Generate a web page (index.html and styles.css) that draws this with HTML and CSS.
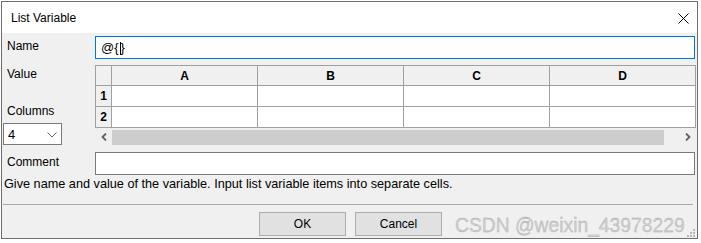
FILE: index.html
```html
<html>
<head>
  <meta charset="UTF-8">
  <title>List Variable</title>
  <link rel="stylesheet" href="styles.css">
</head>
<body>
  <div class="dialog">
    <div class="titlebar">
      <span class="title">List Variable</span>
      <svg class="close" width="11" height="11" viewBox="0 0 11 11">
        <path d="M0.5 0.5 L10.5 10.5 M10.5 0.5 L0.5 10.5" stroke="#000" stroke-width="1" fill="none"/>
      </svg>
    </div>

    <div class="content">
      <div class="field-row">
        <label class="field-label">Name</label>
        <div class="text-input focused">@{<span class="caret"></span>}</div>
      </div>

      <div class="value-row">
        <div class="side">
          <div class="side-label value-label">Value</div>
          <div class="side-label columns-label">Columns</div>
          <div class="combo">
            <span>4</span>
            <svg width="10" height="6" viewBox="0 0 10 6">
              <polyline points="0.5,0.5 5,5 9.5,0.5" stroke="#666" stroke-width="1" fill="none"/>
            </svg>
          </div>
        </div>

        <div class="sheet">
          <div class="grid">
            <div class="cell corner"></div>
            <div class="cell head">A</div>
            <div class="cell head">B</div>
            <div class="cell head">C</div>
            <div class="cell head">D</div>

            <div class="cell rowhead">1</div>
            <div class="cell"></div>
            <div class="cell"></div>
            <div class="cell"></div>
            <div class="cell"></div>

            <div class="cell rowhead">2</div>
            <div class="cell"></div>
            <div class="cell"></div>
            <div class="cell"></div>
            <div class="cell"></div>
          </div>

          <div class="hscroll">
            <div class="arrow">
              <svg width="6" height="8" viewBox="0 0 6 8">
                <polyline points="5,0.5 1.5,4 5,7.5" stroke="#606060" stroke-width="1.8" fill="none"/>
              </svg>
            </div>
            <div class="track"><div class="thumb"></div></div>
            <div class="arrow">
              <svg width="6" height="8" viewBox="0 0 6 8">
                <polyline points="1,0.5 4.5,4 1,7.5" stroke="#606060" stroke-width="1.8" fill="none"/>
              </svg>
            </div>
          </div>
        </div>
      </div>

      <div class="field-row comment-row">
        <label class="field-label">Comment</label>
        <div class="text-input"></div>
      </div>

      <p class="hint">Give name and value of the variable. Input list variable items into separate cells.</p>
    </div>

    <div class="footer">
      <button class="btn">OK</button>
      <button class="btn">Cancel</button>
    </div>

    <div class="watermark">CSDN @weixin_43978229</div>
    <svg class="grip" width="9" height="9" viewBox="0 0 9 9">
      <rect x="6" y="0" width="2" height="2" fill="#b8b8b8"/>
      <rect x="3" y="3" width="2" height="2" fill="#b8b8b8"/>
      <rect x="6" y="3" width="2" height="2" fill="#b8b8b8"/>
      <rect x="0" y="6" width="2" height="2" fill="#b8b8b8"/>
      <rect x="3" y="6" width="2" height="2" fill="#b8b8b8"/>
      <rect x="6" y="6" width="2" height="2" fill="#b8b8b8"/>
    </svg>
  </div>
</body>
</html>
```

FILE: styles.css
```css
body {
    margin: 0;
    background-color: #ffffff;
    font-family: 'Liberation Sans', Arial, sans-serif;
    font-size: 12px;
    color: #000000;
}

.dialog {
    position: relative;
    box-sizing: border-box;
    width: 697px;
    height: 238px;
    margin: 1px 0 0 1px;
    border: 1px solid #6e6e6e;
    background-color: #f0f0f0;
    overflow: hidden;
}

/* Title bar */
.titlebar {
    height: 31px;
    background-color: #ffffff;
    display: flex;
    align-items: center;
    justify-content: space-between;
    padding: 0 8px 0 9px;
}

.title {
    line-height: 14px;
}

.close {
    display: block;
    margin-top: 1px;
}

/* Form rows */
.content {
    padding-top: 3px;
}

.field-row {
    display: flex;
    height: 23px;
}

.field-label {
    width: 88px;
    padding: 3px 0 0 5px;
    line-height: 14px;
}

.text-input {
    box-sizing: border-box;
    width: 600px;
    height: 23px;
    border: 1px solid #7a7a7a;
    background-color: #ffffff;
    padding: 4px 0 0 5px;
    line-height: 14px;
    font-size: 13px;
}

.text-input.focused {
    border-color: #0078d7;
}

.caret {
    display: inline-block;
    width: 1px;
    height: 13px;
    margin: 0 0 -3px 1px;
    background-color: #000000;
}

/* Value grid */
.value-row {
    display: flex;
    margin-top: 6px;
}

.side {
    width: 93px;
}

.side-label {
    padding-left: 5px;
    line-height: 14px;
}

.value-label {
    margin-top: 2px;
}

.columns-label {
    margin-top: 23px;
}

.combo {
    box-sizing: border-box;
    width: 59px;
    height: 22px;
    margin: 5px 0 0 1px;
    border: 1px solid #7a7a7a;
    background-color: #ffffff;
    display: flex;
    align-items: center;
    justify-content: space-between;
    padding: 0 4px 0 4px;
    font-size: 13px;
}

.combo svg {
    display: block;
    margin-top: 1px;
}

.sheet {
    width: 601px;
}

.grid {
    display: grid;
    grid-template-columns: 16px repeat(4, 146px);
    grid-template-rows: 20px 21px 21px;
    border-top: 1px solid #a0a0a0;
    border-left: 1px solid #a0a0a0;
}

.cell {
    box-sizing: border-box;
    border-right: 1px solid #a0a0a0;
    border-bottom: 1px solid #a0a0a0;
    background-color: #ffffff;
}

.cell.corner,
.cell.head,
.cell.rowhead {
    background-color: #f0f0f0;
    font-weight: bold;
    display: flex;
    align-items: center;
    justify-content: center;
}

.hscroll {
    display: flex;
    height: 18px;
}

.arrow {
    width: 17px;
    display: flex;
    align-items: center;
    justify-content: center;
}

.track {
    flex: 1;
    padding-top: 2px;
}

.thumb {
    width: 552px;
    height: 15px;
    background-color: #cdcdcd;
}

.comment-row {
    margin-top: 6px;
}

.hint {
    margin: 2px 0 0 2px;
    line-height: 14px;
    font-size: 12.7px;
}

/* Buttons */
.footer {
    margin: 13px 4px 0 1px;
    border-top: 1px solid #a9a9a9;
    padding: 7px 0 0 256px;
    display: flex;
    gap: 9px;
}

.btn {
    box-sizing: border-box;
    width: 87px;
    height: 24px;
    border: 1px solid #adadad;
    background-color: #e1e1e1;
    font-family: 'Liberation Sans', Arial, sans-serif;
    font-size: 12px;
    color: #000000;
    padding: 0;
}

.watermark {
    position: absolute;
    left: 453px;
    top: 214px;
    font-size: 19.3px;
    line-height: 19px;
    color: #d0d0d0;
    -webkit-text-stroke: 0.3px #a8a8a8;
    white-space: nowrap;
}

.grip {
    position: absolute;
    right: 1px;
    bottom: 0;
}
```
